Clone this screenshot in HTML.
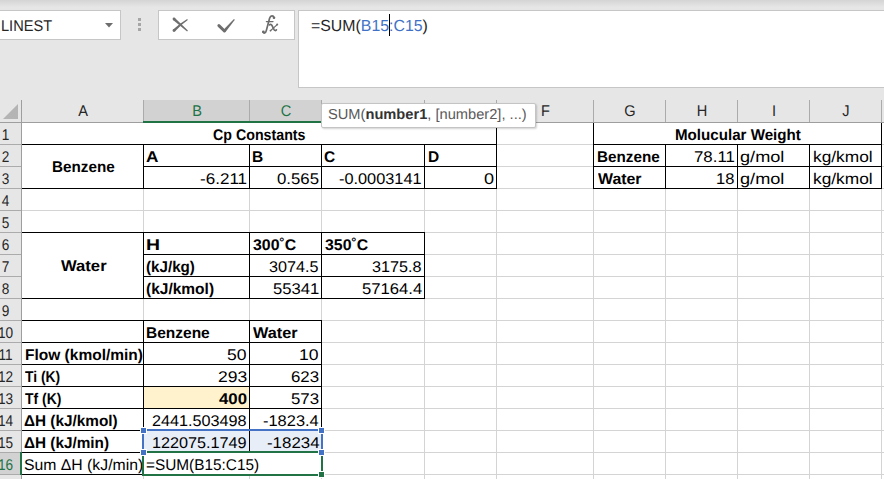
<!DOCTYPE html><html><head><meta charset="utf-8"><style>
*{margin:0;padding:0;box-sizing:border-box}
html,body{width:884px;height:479px;overflow:hidden;background:#e6e6e6;font-family:"Liberation Sans",sans-serif;text-rendering:geometricPrecision}
.a{position:absolute}
.t{position:absolute;white-space:pre;line-height:30px;transform-origin:0 0}
</style></head><body>
<div class="a" style="left:0;top:0;width:884px;height:7px;background:linear-gradient(#d4d4d4,#e6e6e6)"></div>
<div class="a" style="left:-10px;top:10px;width:131px;height:30px;background:#fff;border:1px solid #c6c6c6"></div>
<svg class="a" style="left:105px;top:23px" width="8" height="5"><path d="M0 0H8L4 4.5Z" fill="#6d6d6d"/></svg>
<div class="a" style="left:138px;top:18px;width:3px;height:3px;background:#a6a6a6"></div>
<div class="a" style="left:138px;top:23px;width:3px;height:3px;background:#a6a6a6"></div>
<div class="a" style="left:138px;top:28px;width:3px;height:3px;background:#a6a6a6"></div>
<div class="a" style="left:158px;top:10px;width:137px;height:30px;background:#fff;border:1px solid #c6c6c6"></div>
<svg class="a" style="left:168px;top:12px" width="24" height="24"><g fill="#6e6e6e"><path d="M5.07 8.05L6.93 5.95L19.9 18.55L19.1 19.45Z"/><circle cx="6" cy="7" r="1.4"/><path d="M6.885 19.585L5.115 17.415Q12 11.5 19.18 7.11L19.82 7.89Q13 12.5 6.885 19.585Z"/><circle cx="6" cy="18.5" r="1.4"/></g></svg>
<svg class="a" style="left:212px;top:12px" width="26" height="24"><g fill="#6e6e6e"><path d="M6.9 13.6L12.4 19" stroke="#6e6e6e" stroke-width="3" stroke-linecap="round"/><path d="M13.54 19.98L11.26 18.02L21.95 7.01L22.85 7.79Z"/></g></svg>
<svg class="a" style="left:255px;top:10px" width="30" height="30"><g fill="none" stroke="#6b6b6b" stroke-linecap="round"><path d="M18.9 7.6C18.6 5.6 15.6 4.9 14.6 8.2L11.3 20.6C10.6 23.6 8.6 23.6 8.2 21.8" stroke-width="1.7"/><path d="M11.4 11.6H18" stroke-width="1.3"/><path d="M14.4 14.9Q15.8 13.6 16.8 15.2L19.2 19.8Q20 21.2 21.4 19.9" stroke-width="1.7"/><path d="M22.2 14.6L15.6 20.6" stroke-width="1.2"/></g><circle cx="19" cy="7.7" r="1.3" fill="#6b6b6b"/><circle cx="8.4" cy="21.9" r="1.4" fill="#6b6b6b"/><circle cx="22.2" cy="14.6" r="1" fill="#6b6b6b"/><circle cx="15.5" cy="20.6" r="0.9" fill="#6b6b6b"/></svg>
<div class="a" style="left:298px;top:10px;width:600px;height:78px;background:#fff;border:1px solid #c6c6c6"></div>
<div class="a" style="left:21px;top:122px;width:870px;height:400px;background:#fff"></div>
<div class="a" style="left:0;top:100px;width:884px;height:22px;background:#e6e6e6"></div>
<div class="a" style="left:0;top:122px;width:21px;height:360px;background:#e6e6e6"></div>
<div class="a" style="left:143px;top:100px;width:178px;height:22px;background:#d2d2d2"></div>
<div class="a" style="left:0;top:452px;width:21px;height:22px;background:#d2d2d2"></div>
<div class="a" style="left:143px;top:122px;width:1px;height:360px;background:#d4d4d4"></div>
<div class="a" style="left:249px;top:122px;width:1px;height:360px;background:#d4d4d4"></div>
<div class="a" style="left:321px;top:122px;width:1px;height:360px;background:#d4d4d4"></div>
<div class="a" style="left:424px;top:122px;width:1px;height:360px;background:#d4d4d4"></div>
<div class="a" style="left:496px;top:122px;width:1px;height:360px;background:#d4d4d4"></div>
<div class="a" style="left:593px;top:122px;width:1px;height:360px;background:#d4d4d4"></div>
<div class="a" style="left:665px;top:122px;width:1px;height:360px;background:#d4d4d4"></div>
<div class="a" style="left:737px;top:122px;width:1px;height:360px;background:#d4d4d4"></div>
<div class="a" style="left:809px;top:122px;width:1px;height:360px;background:#d4d4d4"></div>
<div class="a" style="left:881px;top:122px;width:1px;height:360px;background:#d4d4d4"></div>
<div class="a" style="left:21px;top:122px;width:870px;height:1px;background:#d4d4d4"></div>
<div class="a" style="left:21px;top:144px;width:870px;height:1px;background:#d4d4d4"></div>
<div class="a" style="left:21px;top:166px;width:870px;height:1px;background:#d4d4d4"></div>
<div class="a" style="left:21px;top:188px;width:870px;height:1px;background:#d4d4d4"></div>
<div class="a" style="left:21px;top:210px;width:870px;height:1px;background:#d4d4d4"></div>
<div class="a" style="left:21px;top:232px;width:870px;height:1px;background:#d4d4d4"></div>
<div class="a" style="left:21px;top:254px;width:870px;height:1px;background:#d4d4d4"></div>
<div class="a" style="left:21px;top:276px;width:870px;height:1px;background:#d4d4d4"></div>
<div class="a" style="left:21px;top:298px;width:870px;height:1px;background:#d4d4d4"></div>
<div class="a" style="left:21px;top:320px;width:870px;height:1px;background:#d4d4d4"></div>
<div class="a" style="left:21px;top:342px;width:870px;height:1px;background:#d4d4d4"></div>
<div class="a" style="left:21px;top:364px;width:870px;height:1px;background:#d4d4d4"></div>
<div class="a" style="left:21px;top:386px;width:870px;height:1px;background:#d4d4d4"></div>
<div class="a" style="left:21px;top:408px;width:870px;height:1px;background:#d4d4d4"></div>
<div class="a" style="left:21px;top:430px;width:870px;height:1px;background:#d4d4d4"></div>
<div class="a" style="left:21px;top:452px;width:870px;height:1px;background:#d4d4d4"></div>
<div class="a" style="left:21px;top:474px;width:870px;height:1px;background:#d4d4d4"></div>
<div class="a" style="left:143px;top:100px;width:1px;height:22px;background:#ababab"></div>
<div class="a" style="left:249px;top:100px;width:1px;height:22px;background:#ababab"></div>
<div class="a" style="left:321px;top:100px;width:1px;height:22px;background:#ababab"></div>
<div class="a" style="left:424px;top:100px;width:1px;height:22px;background:#ababab"></div>
<div class="a" style="left:496px;top:100px;width:1px;height:22px;background:#ababab"></div>
<div class="a" style="left:593px;top:100px;width:1px;height:22px;background:#ababab"></div>
<div class="a" style="left:665px;top:100px;width:1px;height:22px;background:#ababab"></div>
<div class="a" style="left:737px;top:100px;width:1px;height:22px;background:#ababab"></div>
<div class="a" style="left:809px;top:100px;width:1px;height:22px;background:#ababab"></div>
<div class="a" style="left:881px;top:100px;width:1px;height:22px;background:#ababab"></div>
<div class="a" style="left:0;top:144px;width:21px;height:1px;background:#ababab"></div>
<div class="a" style="left:0;top:166px;width:21px;height:1px;background:#ababab"></div>
<div class="a" style="left:0;top:188px;width:21px;height:1px;background:#ababab"></div>
<div class="a" style="left:0;top:210px;width:21px;height:1px;background:#ababab"></div>
<div class="a" style="left:0;top:232px;width:21px;height:1px;background:#ababab"></div>
<div class="a" style="left:0;top:254px;width:21px;height:1px;background:#ababab"></div>
<div class="a" style="left:0;top:276px;width:21px;height:1px;background:#ababab"></div>
<div class="a" style="left:0;top:298px;width:21px;height:1px;background:#ababab"></div>
<div class="a" style="left:0;top:320px;width:21px;height:1px;background:#ababab"></div>
<div class="a" style="left:0;top:342px;width:21px;height:1px;background:#ababab"></div>
<div class="a" style="left:0;top:364px;width:21px;height:1px;background:#ababab"></div>
<div class="a" style="left:0;top:386px;width:21px;height:1px;background:#ababab"></div>
<div class="a" style="left:0;top:408px;width:21px;height:1px;background:#ababab"></div>
<div class="a" style="left:0;top:430px;width:21px;height:1px;background:#ababab"></div>
<div class="a" style="left:0;top:452px;width:21px;height:1px;background:#ababab"></div>
<div class="a" style="left:0;top:474px;width:21px;height:1px;background:#ababab"></div>
<div class="a" style="left:21px;top:100px;width:1px;height:380px;background:#9e9e9e"></div>
<div class="a" style="left:0;top:122px;width:884px;height:1px;background:#9e9e9e"></div>
<svg class="a" style="left:3px;top:104px" width="16" height="15"><path d="M15 0V15H0Z" fill="#b4b4b4"/></svg>
<div class="a" style="left:21px;top:101px;width:122px;text-align:center;color:#262626;font-size:15.5px;line-height:22px;transform:translateX(1px) scaleX(0.94)">A</div>
<div class="a" style="left:143px;top:101px;width:106px;text-align:center;color:#217346;font-size:15.5px;line-height:22px;transform:translateX(1px) scaleX(0.94)">B</div>
<div class="a" style="left:249px;top:101px;width:72px;text-align:center;color:#217346;font-size:15.5px;line-height:22px;transform:translateX(1px) scaleX(0.94)">C</div>
<div class="a" style="left:321px;top:101px;width:103px;text-align:center;color:#262626;font-size:15.5px;line-height:22px;transform:translateX(1px) scaleX(0.94)">D</div>
<div class="a" style="left:424px;top:101px;width:72px;text-align:center;color:#262626;font-size:15.5px;line-height:22px;transform:translateX(1px) scaleX(0.94)">E</div>
<div class="a" style="left:496px;top:101px;width:97px;text-align:center;color:#262626;font-size:15.5px;line-height:22px;transform:translateX(1px) scaleX(0.94)">F</div>
<div class="a" style="left:593px;top:101px;width:72px;text-align:center;color:#262626;font-size:15.5px;line-height:22px;transform:translateX(1px) scaleX(0.94)">G</div>
<div class="a" style="left:665px;top:101px;width:72px;text-align:center;color:#262626;font-size:15.5px;line-height:22px;transform:translateX(1px) scaleX(0.94)">H</div>
<div class="a" style="left:737px;top:101px;width:72px;text-align:center;color:#262626;font-size:15.5px;line-height:22px;transform:translateX(1px) scaleX(0.94)">I</div>
<div class="a" style="left:809px;top:101px;width:72px;text-align:center;color:#262626;font-size:15.5px;line-height:22px;transform:translateX(1px) scaleX(0.94)">J</div>
<div class="a" style="left:143px;top:121px;width:179px;height:2px;background:#217346"></div>
<div class="a" style="left:-10.5px;top:125px;width:31px;text-align:center;color:#262626;font-size:15.5px;line-height:22px;transform:scaleX(0.88)">1</div>
<div class="a" style="left:-10.5px;top:147px;width:31px;text-align:center;color:#262626;font-size:15.5px;line-height:22px;transform:scaleX(0.88)">2</div>
<div class="a" style="left:-10.5px;top:169px;width:31px;text-align:center;color:#262626;font-size:15.5px;line-height:22px;transform:scaleX(0.88)">3</div>
<div class="a" style="left:-10.5px;top:191px;width:31px;text-align:center;color:#262626;font-size:15.5px;line-height:22px;transform:scaleX(0.88)">4</div>
<div class="a" style="left:-10.5px;top:213px;width:31px;text-align:center;color:#262626;font-size:15.5px;line-height:22px;transform:scaleX(0.88)">5</div>
<div class="a" style="left:-10.5px;top:235px;width:31px;text-align:center;color:#262626;font-size:15.5px;line-height:22px;transform:scaleX(0.88)">6</div>
<div class="a" style="left:-10.5px;top:257px;width:31px;text-align:center;color:#262626;font-size:15.5px;line-height:22px;transform:scaleX(0.88)">7</div>
<div class="a" style="left:-10.5px;top:279px;width:31px;text-align:center;color:#262626;font-size:15.5px;line-height:22px;transform:scaleX(0.88)">8</div>
<div class="a" style="left:-10.5px;top:301px;width:31px;text-align:center;color:#262626;font-size:15.5px;line-height:22px;transform:scaleX(0.88)">9</div>
<div class="a" style="left:-10.5px;top:323px;width:31px;text-align:center;color:#262626;font-size:15.5px;line-height:22px;transform:scaleX(0.88)">10</div>
<div class="a" style="left:-10.5px;top:345px;width:31px;text-align:center;color:#262626;font-size:15.5px;line-height:22px;transform:scaleX(0.88)">11</div>
<div class="a" style="left:-10.5px;top:367px;width:31px;text-align:center;color:#262626;font-size:15.5px;line-height:22px;transform:scaleX(0.88)">12</div>
<div class="a" style="left:-10.5px;top:389px;width:31px;text-align:center;color:#262626;font-size:15.5px;line-height:22px;transform:scaleX(0.88)">13</div>
<div class="a" style="left:-10.5px;top:411px;width:31px;text-align:center;color:#262626;font-size:15.5px;line-height:22px;transform:scaleX(0.88)">14</div>
<div class="a" style="left:-10.5px;top:433px;width:31px;text-align:center;color:#262626;font-size:15.5px;line-height:22px;transform:scaleX(0.88)">15</div>
<div class="a" style="left:-10.5px;top:455px;width:31px;text-align:center;color:#217346;font-size:15.5px;line-height:22px;transform:scaleX(0.88)">16</div>
<div class="a" style="left:20px;top:452px;width:2px;height:23px;background:#217346"></div>
<div class="a" style="left:144px;top:387px;width:105px;height:21px;background:#fff2cc"></div>
<div class="a" style="left:144px;top:431px;width:177px;height:21px;background:#e8eef8"></div>
<div class="a" style="left:22px;top:123px;width:474px;height:21px;background:#fff"></div>
<div class="a" style="left:594px;top:123px;width:287px;height:21px;background:#fff"></div>
<div class="a" style="left:22px;top:145px;width:121px;height:43px;background:#fff"></div>
<div class="a" style="left:22px;top:233px;width:121px;height:65px;background:#fff"></div>
<div class="a" style="left:22px;top:144px;width:475px;height:1px;background:#000"></div>
<div class="a" style="left:22px;top:188px;width:475px;height:1px;background:#000"></div>
<div class="a" style="left:496px;top:123px;width:1px;height:66px;background:#000"></div>
<div class="a" style="left:143px;top:166px;width:354px;height:1px;background:#000"></div>
<div class="a" style="left:143px;top:144px;width:1px;height:45px;background:#000"></div>
<div class="a" style="left:249px;top:144px;width:1px;height:45px;background:#000"></div>
<div class="a" style="left:321px;top:144px;width:1px;height:45px;background:#000"></div>
<div class="a" style="left:424px;top:144px;width:1px;height:45px;background:#000"></div>
<div class="a" style="left:593px;top:144px;width:289px;height:1px;background:#000"></div>
<div class="a" style="left:593px;top:166px;width:289px;height:1px;background:#000"></div>
<div class="a" style="left:593px;top:188px;width:289px;height:1px;background:#000"></div>
<div class="a" style="left:593px;top:123px;width:1px;height:66px;background:#000"></div>
<div class="a" style="left:881px;top:123px;width:1px;height:66px;background:#000"></div>
<div class="a" style="left:665px;top:144px;width:1px;height:45px;background:#000"></div>
<div class="a" style="left:737px;top:144px;width:1px;height:45px;background:#000"></div>
<div class="a" style="left:809px;top:144px;width:1px;height:45px;background:#000"></div>
<div class="a" style="left:22px;top:232px;width:403px;height:1px;background:#000"></div>
<div class="a" style="left:22px;top:298px;width:403px;height:1px;background:#000"></div>
<div class="a" style="left:143px;top:254px;width:282px;height:1px;background:#000"></div>
<div class="a" style="left:143px;top:276px;width:282px;height:1px;background:#000"></div>
<div class="a" style="left:143px;top:232px;width:1px;height:67px;background:#000"></div>
<div class="a" style="left:249px;top:232px;width:1px;height:67px;background:#000"></div>
<div class="a" style="left:321px;top:232px;width:1px;height:67px;background:#000"></div>
<div class="a" style="left:424px;top:232px;width:1px;height:67px;background:#000"></div>
<div class="a" style="left:22px;top:320px;width:300px;height:1px;background:#000"></div>
<div class="a" style="left:22px;top:342px;width:300px;height:1px;background:#000"></div>
<div class="a" style="left:22px;top:364px;width:300px;height:1px;background:#000"></div>
<div class="a" style="left:22px;top:386px;width:300px;height:1px;background:#000"></div>
<div class="a" style="left:22px;top:408px;width:300px;height:1px;background:#000"></div>
<div class="a" style="left:22px;top:430px;width:300px;height:1px;background:#000"></div>
<div class="a" style="left:22px;top:452px;width:300px;height:1px;background:#000"></div>
<div class="a" style="left:22px;top:474px;width:300px;height:1px;background:#000"></div>
<div class="a" style="left:143px;top:320px;width:1px;height:155px;background:#000"></div>
<div class="a" style="left:249px;top:320px;width:1px;height:155px;background:#000"></div>
<div class="a" style="left:321px;top:320px;width:1px;height:155px;background:#000"></div>
<div class="a" style="left:144px;top:453px;width:177px;height:21px;background:#fff"></div>
<div class="t" style="left:1.06px;top:12px;font-size:15.5px;font-weight:normal;color:#262626;transform:scaleX(0.9423)">LINEST</div>
<div class="t" style="left:311.01px;top:12px;font-size:16px;font-weight:normal;color:#262626;transform:scaleX(0.9913)">=SUM(<span style="color:#3f72c6">B15:C15</span>)</div>
<div class="t" style="left:213.08px;top:121px;font-size:15.5px;font-weight:bold;color:#000;transform:scaleX(0.9184)">Cp Constants</div>
<div class="t" style="left:675.02px;top:121px;font-size:15.5px;font-weight:bold;color:#000;transform:scaleX(0.9764)">Molucular Weight</div>
<div class="t" style="left:145.89px;top:143px;font-size:15.5px;font-weight:bold;color:#000;transform:scaleX(1.1111)">A</div>
<div class="t" style="left:252.00px;top:143px;font-size:15.5px;font-weight:bold;color:#000;transform:scaleX(1.0000)">B</div>
<div class="t" style="left:324.00px;top:143px;font-size:15.5px;font-weight:bold;color:#000;transform:scaleX(1.0000)">C</div>
<div class="t" style="left:428.00px;top:143px;font-size:15.5px;font-weight:bold;color:#000;transform:scaleX(1.0000)">D</div>
<div class="t" style="left:597.02px;top:143px;font-size:15.5px;font-weight:bold;color:#000;transform:scaleX(0.9836)">Benzene</div>
<div class="t" style="left:693.91px;top:143px;font-size:15.5px;font-weight:normal;color:#000;transform:scaleX(1.0857)">78.11</div>
<div class="t" style="left:739.83px;top:143px;font-size:15.5px;font-weight:normal;color:#000;transform:scaleX(1.1714)">g/mol</div>
<div class="t" style="left:812.88px;top:143px;font-size:15.5px;font-weight:normal;color:#000;transform:scaleX(1.1176)">kg/kmol</div>
<div class="t" style="left:199.90px;top:165px;font-size:15.5px;font-weight:normal;color:#000;transform:scaleX(1.1000)">-6.211</div>
<div class="t" style="left:276.92px;top:165px;font-size:15.5px;font-weight:normal;color:#000;transform:scaleX(1.0833)">0.565</div>
<div class="t" style="left:338.95px;top:165px;font-size:15.5px;font-weight:normal;color:#000;transform:scaleX(1.0526)">-0.0003141</div>
<div class="t" style="left:483.83px;top:165px;font-size:15.5px;font-weight:normal;color:#000;transform:scaleX(1.1667)">0</div>
<div class="t" style="left:598.00px;top:165px;font-size:15.5px;font-weight:bold;color:#000;transform:scaleX(1.0244)">Water</div>
<div class="t" style="left:715.93px;top:165px;font-size:15.5px;font-weight:normal;color:#000;transform:scaleX(1.0667)">18</div>
<div class="t" style="left:739.83px;top:165px;font-size:15.5px;font-weight:normal;color:#000;transform:scaleX(1.1714)">g/mol</div>
<div class="t" style="left:812.88px;top:165px;font-size:15.5px;font-weight:normal;color:#000;transform:scaleX(1.1176)">kg/kmol</div>
<div class="t" style="left:52.02px;top:153px;font-size:15.5px;font-weight:bold;color:#000;transform:scaleX(0.9836)">Benzene</div>
<div class="t" style="left:61.00px;top:252px;font-size:15.5px;font-weight:bold;color:#000;transform:scaleX(1.0732)">Water</div>
<div class="t" style="left:145.75px;top:231px;font-size:15.5px;font-weight:bold;color:#000;transform:scaleX(1.2500)">H</div>
<div class="t" style="left:253.00px;top:231px;font-size:15.5px;font-weight:bold;color:#000;transform:scaleX(1.0244)">300˚C</div>
<div class="t" style="left:325.00px;top:231px;font-size:15.5px;font-weight:bold;color:#000;transform:scaleX(1.0244)">350˚C</div>
<div class="t" style="left:146.02px;top:253px;font-size:15.5px;font-weight:bold;color:#000;transform:scaleX(0.9787)">(kJ/kg)</div>
<div class="t" style="left:268.96px;top:253px;font-size:15.5px;font-weight:normal;color:#000;transform:scaleX(1.0444)">3074.5</div>
<div class="t" style="left:371.96px;top:253px;font-size:15.5px;font-weight:normal;color:#000;transform:scaleX(1.0444)">3175.8</div>
<div class="t" style="left:146.00px;top:275px;font-size:15.5px;font-weight:bold;color:#000;transform:scaleX(1.0000)">(kJ/kmol)</div>
<div class="t" style="left:272.93px;top:275px;font-size:15.5px;font-weight:normal;color:#000;transform:scaleX(1.0750)">55341</div>
<div class="t" style="left:361.92px;top:275px;font-size:15.5px;font-weight:normal;color:#000;transform:scaleX(1.0755)">57164.4</div>
<div class="t" style="left:146.00px;top:319px;font-size:15.5px;font-weight:bold;color:#000;transform:scaleX(1.0000)">Benzene</div>
<div class="t" style="left:253.00px;top:319px;font-size:15.5px;font-weight:bold;color:#000;transform:scaleX(1.0488)">Water</div>
<div class="t" style="left:25.00px;top:341px;font-size:15.5px;font-weight:bold;color:#000;transform:scaleX(1.0000)">Flow (kmol/min)</div>
<div class="t" style="left:226.87px;top:341px;font-size:15.5px;font-weight:normal;color:#000;transform:scaleX(1.1333)">50</div>
<div class="t" style="left:298.87px;top:341px;font-size:15.5px;font-weight:normal;color:#000;transform:scaleX(1.1333)">10</div>
<div class="t" style="left:25.00px;top:363px;font-size:15.5px;font-weight:bold;color:#000;transform:scaleX(0.8947)">Ti (K)</div>
<div class="t" style="left:217.87px;top:363px;font-size:15.5px;font-weight:normal;color:#000;transform:scaleX(1.1304)">293</div>
<div class="t" style="left:290.91px;top:363px;font-size:15.5px;font-weight:normal;color:#000;transform:scaleX(1.0870)">623</div>
<div class="t" style="left:25.00px;top:385px;font-size:15.5px;font-weight:bold;color:#000;transform:scaleX(0.8974)">Tf (K)</div>
<div class="t" style="left:219.00px;top:385px;font-size:15.5px;font-weight:bold;color:#000;transform:scaleX(1.0833)">400</div>
<div class="t" style="left:290.91px;top:385px;font-size:15.5px;font-weight:normal;color:#000;transform:scaleX(1.0870)">573</div>
<div class="t" style="left:24.01px;top:407px;font-size:15.5px;font-weight:bold;color:#000;transform:scaleX(0.9891)">ΔH (kJ/kmol)</div>
<div class="t" style="left:151.95px;top:407px;font-size:15.5px;font-weight:normal;color:#000;transform:scaleX(1.0455)">2441.503498</div>
<div class="t" style="left:262.94px;top:407px;font-size:15.5px;font-weight:normal;color:#000;transform:scaleX(1.0600)">-1823.4</div>
<div class="t" style="left:24.01px;top:429px;font-size:15.5px;font-weight:bold;color:#000;transform:scaleX(0.9880)">ΔH (kJ/min)</div>
<div class="t" style="left:151.95px;top:429px;font-size:15.5px;font-weight:normal;color:#000;transform:scaleX(1.0455)">122075.1749</div>
<div class="t" style="left:266.91px;top:429px;font-size:15.5px;font-weight:normal;color:#000;transform:scaleX(1.0889)">-18234</div>
<div class="t" style="left:23.98px;top:451px;font-size:15.5px;font-weight:normal;color:#000;transform:scaleX(1.0175)">Sum ΔH (kJ/min)</div>
<div class="t" style="left:146.01px;top:451px;font-size:15.5px;font-weight:normal;color:#000;transform:scaleX(0.9910)">=SUM(B15:C15)</div>
<div class="a" style="left:389px;top:14px;width:1px;height:22px;background:#000"></div>
<div class="a" style="left:142px;top:429px;width:181px;height:24px;border:2px solid #4472c4"></div>
<div class="a" style="left:142px;top:451px;width:181px;height:25px;border:2px solid #217346"></div>
<div class="a" style="left:318px;top:471px;width:7px;height:7px;background:#fff"></div>
<div class="a" style="left:319px;top:472px;width:5px;height:5px;background:#217346"></div>
<div class="a" style="left:140px;top:427px;width:7px;height:7px;background:#fff"></div>
<div class="a" style="left:141px;top:428px;width:5px;height:5px;background:#4472c4"></div>
<div class="a" style="left:318px;top:427px;width:7px;height:7px;background:#fff"></div>
<div class="a" style="left:319px;top:428px;width:5px;height:5px;background:#4472c4"></div>
<div class="a" style="left:140px;top:449px;width:7px;height:7px;background:#fff"></div>
<div class="a" style="left:141px;top:450px;width:5px;height:5px;background:#4472c4"></div>
<div class="a" style="left:318px;top:449px;width:7px;height:7px;background:#fff"></div>
<div class="a" style="left:319px;top:450px;width:5px;height:5px;background:#4472c4"></div>
<div class="a" style="left:321px;top:103px;width:215px;height:25px;background:#fff;border:1px solid #c4c4c4;border-radius:2px;box-shadow:1px 1px 2px rgba(0,0,0,0.18)"></div>
<div class="t" style="left:327.99px;top:100px;font-size:14.5px;font-weight:normal;color:#5a5a5a;transform:scaleX(1.0103)">SUM(<b style="color:#333">number1</b>, [number2], ...)</div>
</body></html>
